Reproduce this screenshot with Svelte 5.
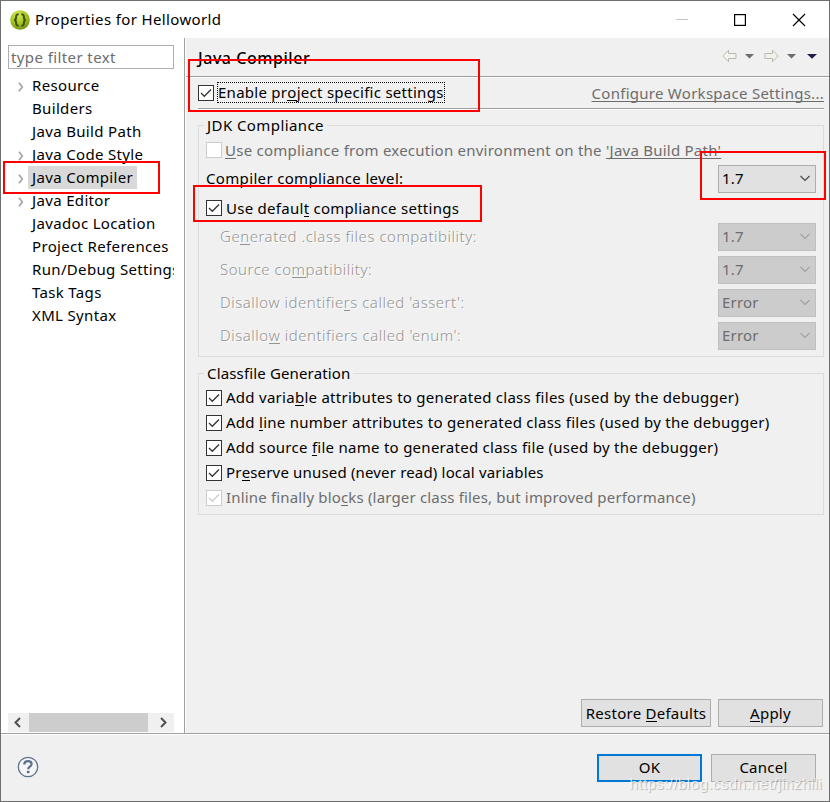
<script>
    let filter = "";
    let selected = "Java Compiler";

    const pages = [
        { label: "Resource", expandable: true },
        { label: "Builders" },
        { label: "Java Build Path" },
        { label: "Java Code Style", expandable: true },
        { label: "Java Compiler", expandable: true },
        { label: "Java Editor", expandable: true },
        { label: "Javadoc Location" },
        { label: "Project References" },
        { label: "Run/Debug Settings" },
        { label: "Task Tags" },
        { label: "XML Syntax" },
    ];

    // Labels are split around their mnemonic letter
    const compliance = [
        { label: ["Ge", "n", "erated .class files compatibility:"], value: "1.7" },
        { label: ["Source co", "m", "patibility:"], value: "1.7" },
        { label: ["Disallow identifie", "r", "s called 'assert':"], value: "Error" },
        { label: ["Disallo", "w", " identifiers called 'enum':"], value: "Error" },
    ];

    const classfile = [
        { label: ["Add varia", "b", "le attributes to generated class files (used by the debugger)"] },
        { label: ["Add ", "l", "ine number attributes to generated class files (used by the debugger)"] },
        { label: ["Add source ", "f", "ile name to generated class file (used by the debugger)"] },
        { label: ["Pr", "e", "serve unused (never read) local variables"], tight: true },
        { label: ["Inline finally blo", "c", "ks (larger class files, but improved performance)"], tight: true, disabled: true },
    ];
</script>

{#snippet check(checked, disabled)}
    <svg class="check" class:off={disabled} viewBox="0 0 16 16">
        <rect x=".5" y=".5" width="15" height="15" fill="#fff" />
        {#if checked}
            <path d="M3 8 L6.3 11.3 L13 4.5" fill="none" stroke-width="1.3" />
        {/if}
    </svg>
{/snippet}

{#snippet mnemonic(parts)}
    <span class="text">{parts[0]}<u>{parts[1]}</u>{parts[2]}</span>
{/snippet}

{#snippet combo(value, disabled)}
    <button class="combo" {disabled}>
        <span>{value}</span>
        <svg width="10" height="7" viewBox="0 0 10 7">
            <path d="M.5 1 L5 5.5 L9.5 1" fill="none" stroke="currentColor" stroke-width="1.1" />
        </svg>
    </button>
{/snippet}

<div class="window">
    <header class="titlebar">
        <svg class="logo" width="20" height="20" viewBox="0 0 20 20">
            <defs>
                <radialGradient id="lime" cx=".4" cy=".25" r=".8">
                    <stop offset="0" stop-color="#d5e95a" />
                    <stop offset=".55" stop-color="#a2c617" />
                    <stop offset="1" stop-color="#718c12" />
                </radialGradient>
            </defs>
            <circle cx="10" cy="10" r="9.8" fill="url(#lime)" />
            <g fill="none" stroke="#3e5016" stroke-width="2">
                <path d="M8.7 4.2 Q6 4.2 6.1 7 Q6.2 9.6 4.3 10 Q6.2 10.4 6.1 13 Q6 15.8 8.7 15.8" />
                <path d="M11.3 4.2 Q14 4.2 13.9 7 Q13.8 9.6 15.7 10 Q13.8 10.4 13.9 13 Q14 15.8 11.3 15.8" />
            </g>
        </svg>
        <span class="title">Properties for Helloworld</span>
        <svg class="controls" width="130" height="14" viewBox="0 0 130 14" fill="none">
            <path d="M0 6.5 H12" stroke="#c4c4c4" />
            <rect x="58.6" y="1.6" width="10.8" height="10.8" stroke="#000" stroke-width="1.2" />
            <path d="M117 1 L129 13 M129 1 L117 13" stroke="#000" stroke-width="1.2" />
        </svg>
    </header>

    <div class="body">
        <aside class="sidebar">
            <input class="filter" placeholder="type filter text" bind:value={filter} />
            <div class="tree">
                {#each pages as page}
                    <!-- svelte-ignore a11y_click_events_have_key_events -->
                    <!-- svelte-ignore a11y_no_static_element_interactions -->
                    <div class="node" on:click={() => (selected = page.label)}>
                        <span class="arrow">
                            {#if page.expandable}
                                <svg width="6" height="10" viewBox="0 0 6 10">
                                    <path d="M1 .7 L4.3 5 L1 9.3" fill="none" stroke="#a6a6a6" stroke-width="1.7" />
                                </svg>
                            {/if}
                        </span>
                        <span class="node-label" class:selected={page.label === selected}>{page.label}</span>
                    </div>
                {/each}
            </div>
            <div class="scrollbar">
                <svg width="21" height="19" viewBox="0 0 21 19">
                    <path d="M12 5 L7.5 9.5 L12 14" fill="none" stroke="#505050" stroke-width="2" />
                </svg>
                <div class="thumb"></div>
                <svg width="21" height="19" viewBox="0 0 21 19">
                    <path d="M8 5 L12.5 9.5 L8 14" fill="none" stroke="#505050" stroke-width="2" />
                </svg>
            </div>
        </aside>

        <main class="page">
            <div class="page-head">
                <h1>Java Compiler</h1>
                <svg class="nav" width="98" height="14" viewBox="0 0 98 14">
                    <g fill="#f2f2ea" stroke="#b9b9b4">
                        <path d="M.8 7 L6.5 1.2 V4.5 H14 V9.5 H6.5 V12.8 Z" />
                        <path d="M56.2 7 L50.5 1.2 V4.5 H43 V9.5 H50.5 V12.8 Z" />
                    </g>
                    <path d="M23 5 H32 L27.5 9.5 Z M65 5 H74 L69.5 9.5 Z" fill="#6d6d6d" />
                    <path d="M85 5 H95 L90 9.7 Z" fill="#211c4d" />
                </svg>
            </div>

            <div class="content">
                <div class="enable">
                    {@render check(true, false)}
                    <span class="focus">{@render mnemonic(["Enable pr", "o", "ject specific settings"])}</span>
                    <span class="link workspace">Configure Workspace Settings...</span>
                </div>

                <section class="group jdk">
                    <h2>JDK Compliance</h2>
                    <div class="row env">
                        {@render check(false, true)}
                        <span class="text"><u>U</u>se compliance from execution environment on the <span class="link">'Java Build Path'</span></span>
                    </div>
                    <div class="row level">
                        <span class="text">Compiler compliance level:</span>
                        {@render combo("1.7", false)}
                    </div>
                    <div class="row defaults">
                        {@render check(true, false)}
                        {@render mnemonic(["Use defaul", "t", " compliance settings"])}
                    </div>
                    {#each compliance as item}
                        <div class="row setting">
                            {@render mnemonic(item.label)}
                            {@render combo(item.value, true)}
                        </div>
                    {/each}
                </section>

                <section class="group classfile">
                    <h2>Classfile Generation</h2>
                    {#each classfile as item}
                        <div class="row option" class:dim={item.disabled} class:tight={item.tight}>
                            {@render check(true, item.disabled)}
                            {@render mnemonic(item.label)}
                        </div>
                    {/each}
                </section>
            </div>

            <div class="page-actions">
                <button class="button restore">{@render mnemonic(["Restore ", "D", "efaults"])}</button>
                <button class="button">{@render mnemonic(["", "A", "pply"])}</button>
            </div>
        </main>
    </div>

    <footer class="footer">
        <svg class="help" width="22" height="22" viewBox="0 0 22 22">
            <circle cx="11" cy="11" r="9.7" fill="#f6f6f6" stroke="#5e708c" stroke-width="1.3" />
            <path d="M7.3 8.4 Q7.3 5.1 11 5.1 Q14.6 5.1 14.6 8 Q14.6 9.6 12.7 10.7 Q11.2 11.6 11.2 13.2" fill="none" stroke="#5e708c" stroke-width="2.2" />
            <rect x="9.9" y="14.8" width="2.6" height="2.4" fill="#5e708c" />
        </svg>
        <div class="footer-actions">
            <button class="button primary">OK</button>
            <button class="button">Cancel</button>
        </div>
    </footer>

    <div class="mark mark-page"></div>
    <div class="mark mark-enable"></div>
    <div class="mark mark-defaults"></div>
    <div class="mark mark-level"></div>
    <div class="watermark">https://blog.csdn.net/jinzhili</div>
</div>

<style>
    :global(body) {
        margin: 0;
        overflow: hidden;
    }

    .window {
        position: relative;
        box-sizing: border-box;
        width: 830px;
        height: 802px;
        display: flex;
        flex-direction: column;
        border: 1px solid #6e6e6e;
        background: #f0f0f0;
        color: #000;
        font-family: "Noto Sans", "Open Sans", sans-serif;
        font-size: 15px;
        line-height: 23px;
        letter-spacing: 0.27px;
        white-space: nowrap;
        user-select: none;
    }

    svg {
        flex: none;
        display: block;
    }

    u {
        text-decoration: none;
        box-shadow: inset 0 -1px currentColor;
        display: inline-block;
        line-height: 18px;
    }

    .titlebar {
        height: 37px;
        display: flex;
        align-items: center;
        padding: 0 23px 0 9px;
        background: #fff;
    }

    .title {
        margin-left: 5px;
        letter-spacing: 0.36px;
    }

    .controls {
        margin-left: auto;
    }

    .body {
        height: 695px;
        display: flex;
    }

    .sidebar {
        box-sizing: border-box;
        width: 184px;
        padding: 7px 10px 1px 7px;
        display: flex;
        flex-direction: column;
        background: #fff;
        border-right: 1px solid #a0a0a0;
    }

    .filter {
        box-sizing: border-box;
        width: 166px;
        height: 24px;
        padding: 0 2px;
        border: 1px solid #abadb3;
        outline: 0;
        font: inherit;
        letter-spacing: 0.4px;
    }

    .filter::placeholder {
        color: #6d6d6d;
        opacity: 1;
    }

    .tree {
        flex: 1;
        padding-top: 5px;
        overflow: hidden;
    }

    .node {
        height: 23px;
        display: flex;
        align-items: center;
        letter-spacing: 0.34px;
    }

    .arrow {
        width: 10px;
        padding-left: 10px;
        padding-top: 2px;
        flex: none;
    }

    .node-label {
        padding: 0 4px;
    }

    .node-label.selected {
        background: #d9d9d9;
    }

    .scrollbar {
        height: 19px;
        display: flex;
        background: #f0f0f0;
    }

    .thumb {
        width: 119px;
        margin-right: 5px;
        background: #cdcdcd;
    }

    .page {
        flex: 1;
        display: flex;
        flex-direction: column;
        border-left: 1px solid #fff;
    }

    .page-head {
        height: 38px;
        display: flex;
        align-items: center;
        justify-content: space-between;
        padding: 0 9px 0 12px;
        border-bottom: 1px solid #a0a0a0;
        box-shadow: 0 1px #fff;
    }

    .nav {
        margin-bottom: 2px;
    }

    h1 {
        margin: 3px 0 0;
        font-size: 16px;
        font-weight: 500;
        letter-spacing: 0.55px;
    }

    .content {
        flex: 1;
        padding: 3px 5px 0 12px;
    }

    .enable {
        height: 28px;
        display: flex;
        align-items: center;
        border-bottom: 1px solid #a0a0a0;
        box-shadow: 0 1px #fff;
    }

    .enable .check {
        margin-bottom: 2px;
    }

    .focus {
        box-sizing: border-box;
        width: 228px;
        height: 21px;
        margin: 0 0 3px 3px;
        border: 1px dotted #000;
        display: flex;
        align-items: center;
    }

    .link {
        color: #6d6d6d;
        text-decoration: underline;
        text-decoration-thickness: 1px;
        text-underline-offset: 2px;
        text-decoration-skip-ink: none;
    }

    .workspace {
        margin: 0 0 2px auto;
    }

    .check {
        width: 16px;
        height: 16px;
        stroke: #333;
    }

    .check.off {
        stroke: #ccc;
    }

    .group {
        box-sizing: border-box;
        border: 1px solid #dcdcdc;
        padding: 0 7px;
    }

    .jdk {
        height: 232px;
        margin-top: 16px;
    }

    .classfile {
        height: 142px;
        margin-top: 16px;
    }

    h2 {
        width: max-content;
        height: 23px;
        margin: -12px 0 0 -2px;
        padding: 0 3px;
        background: #f0f0f0;
        font-size: 15px;
        font-weight: 400;
    }

    .jdk h2 {
        letter-spacing: 0.42px;
    }

    .classfile h2 {
        letter-spacing: 0.15px;
    }

    .row {
        height: 25px;
        display: flex;
        align-items: center;
    }

    .row .check + :global(.text) {
        margin-left: 4px;
    }

    .env {
        height: 26px;
        color: #6d6d6d;
        letter-spacing: 0.24px;
    }

    .env .check + .text {
        margin-left: 3px;
    }

    .level {
        height: 31px;
        justify-content: space-between;
        letter-spacing: 0.34px;
    }

    .defaults {
        height: 27px;
        padding-top: 1px;
        box-sizing: border-box;
    }

    .setting {
        height: 33px;
        padding-left: 14px;
        position: relative;
        top: -1px;
        justify-content: space-between;
    }

    .setting .text {
        color: #949494;
        text-shadow: 1px 1px #fff;
        font-weight: 300;
        letter-spacing: 0.52px;
    }

    .tight {
        letter-spacing: 0.17px;
    }

    .dim {
        color: #6d6d6d;
    }

    .combo {
        box-sizing: border-box;
        width: 98px;
        height: 28px;
        padding: 0 5px 0 3px;
        display: flex;
        align-items: center;
        justify-content: space-between;
        border: 1px solid #adadad;
        background: #e1e1e1;
        color: #000;
        font: inherit;
        letter-spacing: 0.2px;
    }

    .combo svg {
        color: #444;
    }

    .combo:disabled {
        border-color: #bfbfbf;
        background: #ccc;
        color: #6d6d6d;
    }

    .combo:disabled svg {
        color: #a0a0a0;
    }

    .page-actions {
        display: flex;
        justify-content: flex-end;
        gap: 7px;
        padding: 0 6px 6px 0;
    }

    .button {
        box-sizing: border-box;
        width: 105px;
        height: 28px;
        padding: 0;
        border: 1px solid #adadad;
        background: #e1e1e1;
        color: #000;
        font: inherit;
        letter-spacing: 0.25px;
    }

    .restore {
        width: 130px;
    }

    .primary {
        border: 2px solid #0078d7;
    }

    .footer {
        flex: 1;
        display: flex;
        align-items: center;
        justify-content: space-between;
        padding: 0 13px 0 16px;
        border-top: 1px solid #a0a0a0;
        box-shadow: inset 0 1px #fff;
    }

    .help {
        margin-bottom: 2px;
    }

    .footer-actions {
        display: flex;
        gap: 9px;
    }

    /* Red callouts drawn over the dialog */
    .mark {
        position: absolute;
        box-sizing: border-box;
        border: 2px solid #f00;
        pointer-events: none;
    }

    .mark-page {
        left: 2px;
        top: 160px;
        width: 157px;
        height: 33px;
    }

    .mark-enable {
        left: 187px;
        top: 58px;
        width: 292px;
        height: 53px;
    }

    .mark-defaults {
        left: 192px;
        top: 184px;
        width: 289px;
        height: 37px;
    }

    .mark-level {
        left: 699px;
        top: 150px;
        width: 126px;
        height: 49px;
    }

    .watermark {
        position: absolute;
        right: 7px;
        bottom: 6px;
        color: rgba(255, 255, 255, 0.75);
        text-shadow: 1px 1px 1px rgba(0, 0, 0, 0.25);
        font-family: "Liberation Sans", sans-serif;
        font-size: 15px;
        letter-spacing: 0.44px;
        pointer-events: none;
    }
</style>
